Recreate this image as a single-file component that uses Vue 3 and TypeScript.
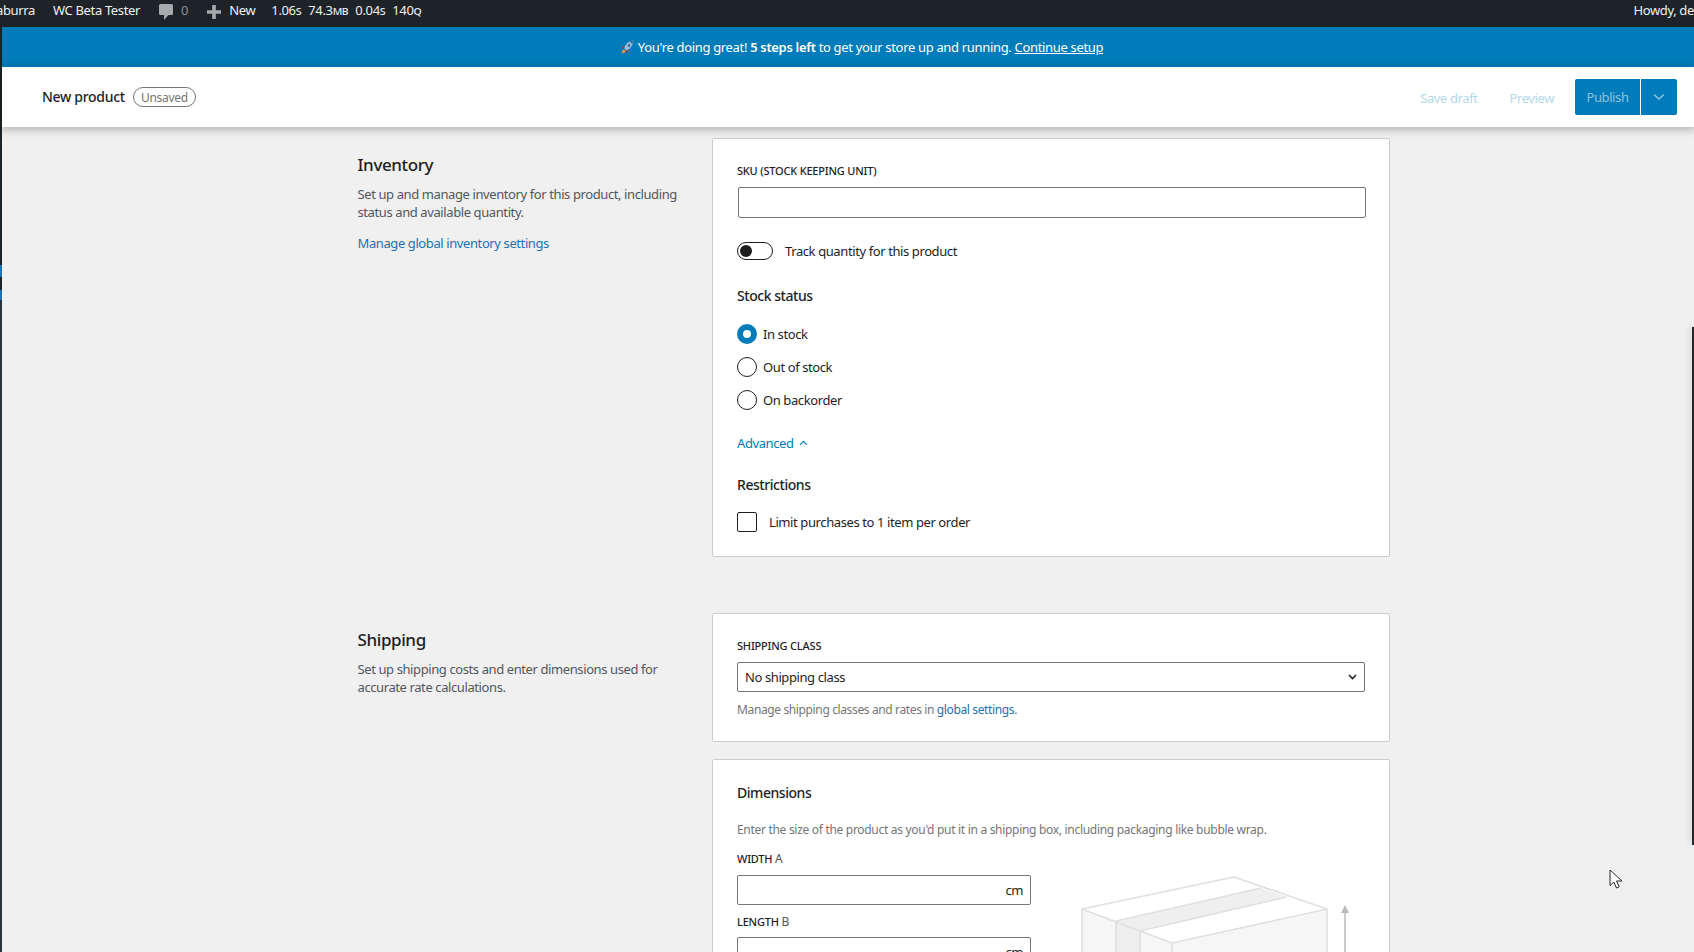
<script setup lang="ts">
const stats = ['1.06s', '74.3mb', '0.04s', '140q']
const stock = [
  { label: 'In stock', on: true },
  { label: 'Out of stock', on: false },
  { label: 'On backorder', on: false }
]
</script>

<template>
  <div class="app">
    <header class="adminbar">
      <span class="ab-site">aburra</span>
      <span class="ab-beta">WC Beta Tester</span>
      <svg class="ab-comment" width="14" height="16" viewBox="0 0 14 16"><path d="M1.500 0h11A1.500 1.500 0 0 1 14 1.500v8a1.500 1.500 0 0 1-1.500 1.500H9.500L5 16v-5H1.500A1.500 1.500 0 0 1 0 9.500v-8A1.500 1.500 0 0 1 1.500 0z" fill="#a7aaad"/></svg>
      <span class="ab-count">0</span>
      <svg class="ab-plus" width="14" height="14" viewBox="0 0 14 14"><path d="M5.200 0h3.600v5.200H14v3.600H8.800V14H5.200V8.800H0V5.200h5.200z" fill="#a7aaad"/></svg>
      <span class="ab-new">New</span>
      <span class="ab-stats"><span v-for="s in stats" :key="s" class="ab-stat">{{ s }}</span></span>
      <span class="ab-howdy">Howdy, de</span>
    </header>

    <div class="below">
      <aside class="strip">
        <span class="strip-a"></span>
        <span class="strip-b"></span>
        <span class="strip-c"></span>
        <span class="strip-d"></span>
        <span class="strip-e"></span>
      </aside>

      <main class="main">
        <div class="banner">
          <svg class="rocket" width="13" height="14" viewBox="0 0 13 14">
            <path d="M12.500.5C9 .8 6 2.500 4 6l-1 2 2.500 2.500 2-1c3-2 4.800-5.500 5-9z" fill="#9dbcd8"/>
            <path d="M12.500.5c-1.500.1-2.700.5-3.800 1.100l2.500 2.700c.7-1.100 1.200-2.400 1.300-3.800z" fill="#3f6fa8"/>
            <circle cx="8" cy="5.500" r="1.300" fill="#2f5f95"/>
            <path d="M4 6 1.500 6.500 .8 9 3 8zM5.500 10.500 5 13l2.500-1 .2-2.500z" fill="#b5373b"/>
            <path d="M3 9.500c-1.200.2-2 1.300-2.300 3.800 2.300-.3 3.500-1.200 3.700-2.400z" fill="#eea12c"/>
          </svg>
          <span>You're doing great! <b>5 steps left</b> to get your store up and running. <a class="banner-link">Continue setup</a></span>
        </div>

        <div class="head">
          <span class="head-title">New product</span>
          <span class="badge">Unsaved</span>
          <span class="head-fill"></span>
          <span class="ghost ghost-save">Save draft</span>
          <span class="ghost ghost-preview">Preview</span>
          <span class="publish">Publish</span>
          <span class="publish-more">
            <svg width="12" height="8" viewBox="0 0 12 8"><path d="M1 1.500l5 4.500 5-4.500" fill="none" stroke="#8cc4e0" stroke-width="1.500"/></svg>
          </span>
        </div>

        <div class="content">
          <section class="sec">
            <div class="side">
              <h2 class="side-title">Inventory</h2>
              <p class="side-text">Set up and manage inventory for this product, including status and available quantity.</p>
              <a class="side-link">Manage global inventory settings</a>
            </div>
            <div class="cards">
              <div class="card">
                <label class="label">SKU (STOCK KEEPING UNIT)</label>
                <div class="input input-sku"></div>
                <div class="toggle-row">
                  <span class="toggle"><span class="knob"></span></span>
                  <span class="body-text">Track quantity for this product</span>
                </div>
                <h3 class="subhead subhead-stock">Stock status</h3>
                <div class="radios">
                  <div v-for="r in stock" :key="r.label" class="radio-row">
                    <span class="radio" :class="{ on: r.on }"></span>
                    <span class="body-text">{{ r.label }}</span>
                  </div>
                </div>
                <div class="advanced">
                  <span>Advanced</span>
                  <svg width="9" height="6" viewBox="0 0 9 6"><path d="M1 4.800l3.500-3.500 3.500 3.500" fill="none" stroke="#007cba" stroke-width="1.200"/></svg>
                </div>
                <h3 class="subhead subhead-restrict">Restrictions</h3>
                <div class="check-row">
                  <span class="check"></span>
                  <span class="body-text">Limit purchases to 1 item per order</span>
                </div>
              </div>
            </div>
          </section>

          <section class="sec sec-ship">
            <div class="side">
              <h2 class="side-title">Shipping</h2>
              <p class="side-text">Set up shipping costs and enter dimensions used for accurate rate calculations.</p>
            </div>
            <div class="cards">
              <div class="card card-ship">
                <label class="label">SHIPPING CLASS</label>
                <div class="input select">
                  <span>No shipping class</span>
                  <svg width="9" height="6" viewBox="0 0 9 6"><path d="M1 1l3.500 3.500L8 1" fill="none" stroke="#1e1e1e" stroke-width="1.600"/></svg>
                </div>
                <p class="help help-ship">Manage shipping classes and rates in <a class="help-link">global settings</a>.</p>
              </div>
              <div class="card card-dim">
                <h3 class="subhead">Dimensions</h3>
                <p class="help help-dim">Enter the size of the product as you'd put it in a shipping box, including packaging like bubble wrap.</p>
                <div class="dim-row">
                  <div class="dim-fields">
                    <label class="label label-width">WIDTH <span class="dim-letter">A</span></label>
                    <div class="input unit"><span>cm</span></div>
                    <label class="label label-length">LENGTH <span class="dim-letter">B</span></label>
                    <div class="input unit unit-second"><span>cm</span></div>
                  </div>
                  <svg class="box" width="285" height="110" viewBox="1075 870 285 110">
                    <path d="M1082 909l90 34v40h-90z" fill="#f6f6f6"/>
                    <path d="M1172 943l155-34v74h-155z" fill="#f6f6f6"/>
                    <path d="M1116 921l24 10v52h-24z" fill="#efefef"/>
                    <path d="M1261 888l26 9-147 34-24-10z" fill="#efefef"/>
                    <g fill="none" stroke="#e0e0e0" stroke-width="1.700" stroke-linejoin="round">
                      <path d="M1082 983v-74l152-32 93 32v74"/>
                      <path d="M1082 909l90 34 155-34"/>
                      <path d="M1172 943v40M1116 921v62M1140 931v52"/>
                      <path d="M1116 921l145-33M1140 931l147-34"/>
                    </g>
                    <path d="M1345 913v70" stroke="#bbb" stroke-width="1.500" fill="none"/>
                    <path d="M1345 905l4 8h-8z" fill="#bbb"/>
                  </svg>
                </div>
              </div>
            </div>
          </section>
        </div>
      </main>
    </div>

    <span class="scrollthumb"></span>
    <svg class="cursor" width="14" height="20" viewBox="0 0 14 20">
      <path d="M1 1v15.500l3.800-3.500 2.700 6 2.700-1.200-2.700-5.800H13z" fill="#fff" stroke="#23282d" stroke-width="1"/>
    </svg>
  </div>
</template>

<style>
html, body { margin: 0; height: 100%; overflow: hidden; background: #f0f0f0; }
</style>

<style scoped>
.app {
  position: relative;
  width: 1694px;
  height: 952px;
  overflow: hidden;
  display: flex;
  flex-direction: column;
  font-family: "Noto Sans", "Open Sans", sans-serif;
  font-size: 13px;
  line-height: 18px;
  color: #1e1e1e;
  letter-spacing: -0.4px;
  background: #f0f0f0;
}
.adminbar {
  flex: 0 0 27px;
  box-sizing: border-box;
  height: 27px;
  padding-bottom: 6px;
  background: #1d2327;
  color: #f0f0f1;
  display: flex;
  align-items: center;
  line-height: 21px;
  letter-spacing: -0.35px;
  white-space: nowrap;
  overflow: hidden;
}
.ab-site { margin-left: -4px; }
.ab-beta { margin-left: 18px; }
.ab-comment { margin: 3px 0 0 19px; }
.ab-count { margin-left: 8px; color: #8c8f94; }
.ab-plus { margin: 3px 0 0 19px; }
.ab-new { margin-left: 8px; }
.ab-stats { margin-left: 16px; display: flex; gap: 7px; font-variant: small-caps; }
.ab-howdy { margin-left: auto; }

.below { flex: 1; display: flex; min-height: 0; }
.strip { flex: 0 0 2px; display: flex; flex-direction: column; background: #2c3338; }
.strip-a { height: 238px; background: #1d2327; }
.strip-b { height: 12px; background: #2271b1; }
.strip-c { height: 13px; background: #1d2327; }
.strip-d { height: 10px; background: #2271b1; }
.strip-e { flex: 1; background: #2c3338; }

.main { flex: 1; min-width: 0; display: flex; flex-direction: column; }
.banner {
  flex: 0 0 40px;
  background: #007cba;
  color: #fff;
  display: flex;
  align-items: center;
  justify-content: center;
  gap: 4px;
  padding-left: 28px;
  letter-spacing: -0.33px;
}
.banner b { font-weight: 600; }
.banner-link { text-decoration: underline; }

.head {
  position: relative;
  z-index: 2;
  flex: 0 0 60px;
  box-sizing: border-box;
  background: #fff;
  display: flex;
  align-items: center;
  padding: 0 17px 0 40px;
  box-shadow: 0 2px 8px 1px rgba(0, 0, 0, 0.25);
}
.head-title { font-size: 14px; font-weight: 500; letter-spacing: -0.3px; }
.badge {
  margin-left: 8px;
  box-sizing: border-box;
  height: 20px;
  width: 63px;
  border: 1px solid #757575;
  border-radius: 10px;
  font-size: 12px;
  line-height: 19px;
  color: #757575;
  text-align: center;
  letter-spacing: -0.3px;
}
.head-fill { flex: 1; }
.ghost { color: #b3d8ea; padding-top: 1px; letter-spacing: -0.4px; }
.ghost-preview { margin-left: 32px; }
.publish {
  margin-left: 21px;
  width: 65px;
  height: 36px;
  background: #007cba;
  border-radius: 2px 0 0 2px;
  color: #8cc4e0;
  text-align: center;
  line-height: 37px;
}
.publish-more {
  margin-left: 1px;
  width: 36px;
  height: 36px;
  background: #007cba;
  border-radius: 0 2px 2px 0;
  display: flex;
  align-items: center;
  justify-content: center;
}

.content { flex: 1; min-height: 0; padding: 11px 0 0 355.5px; }
.sec { display: flex; }
.sec-ship { margin-top: 56px; }
.side { flex: 0 0 354.5px; width: 354.5px; }
.side-title { margin: 15px 0 0; font-size: 17px; line-height: 24px; font-weight: 500; letter-spacing: -0.4px; }
.side-text { margin: 8px 0 0; width: 326px; color: #50575e; }
.side-link { display: block; margin-top: 13px; color: #2271b1; }
.cards { width: 678px; display: flex; flex-direction: column; gap: 17px; }
.card {
  background: #fff;
  border: 1px solid #ccc;
  border-radius: 2px;
  padding: 24px 23px 24px 24px;
  box-sizing: border-box;
}
.card-ship { padding-bottom: 23px; }
.card-dim { padding-top: 23px; }
.label { display: block; font-size: 11px; line-height: 16px; font-weight: 500; letter-spacing: -0.2px; }
.input {
  box-sizing: border-box;
  height: 30px;
  margin-top: 8px;
  background: #fff;
  border: 1px solid #757575;
  border-radius: 2px;
}
.input-sku { margin-left: 1px; width: 628px; height: 31px; }
.toggle-row { display: flex; align-items: center; margin-top: 24px; }
.toggle {
  box-sizing: border-box;
  width: 36px;
  height: 18px;
  border: 1.5px solid #1e1e1e;
  border-radius: 9px;
  display: flex;
  align-items: center;
  padding-left: 2px;
}
.knob { width: 12px; height: 12px; border-radius: 50%; background: #1e1e1e; }
.toggle-row .body-text { margin-left: 12px; }
.body-text { color: #1e1e1e; }
.subhead { margin: 0; font-size: 14px; line-height: 20px; font-weight: 500; letter-spacing: -0.45px; }
.subhead-stock { margin-top: 26px; }
.radios { margin-top: 18px; display: flex; flex-direction: column; gap: 13px; }
.radio-row { display: flex; align-items: center; gap: 6px; height: 20px; }
.radio {
  box-sizing: border-box;
  width: 20px;
  height: 20px;
  border: 1px solid #1e1e1e;
  border-radius: 50%;
  background: #fff;
}
.radio.on { border: 6.5px solid #007cba; }
.advanced { margin-top: 24px; display: flex; align-items: center; gap: 5px; color: #007cba; }
.subhead-restrict { margin-top: 23px; }
.check-row { margin-top: 17px; display: flex; align-items: center; gap: 12px; }
.check {
  box-sizing: border-box;
  width: 20px;
  height: 20px;
  border: 1px solid #1e1e1e;
  border-radius: 2px;
}
.select {
  width: 628px;
  display: flex;
  align-items: center;
  justify-content: space-between;
  padding: 0 7px 0 7px;
  margin-top: 8px;
}
.help { margin: 9px 0 0; font-size: 12px; line-height: 16px; color: #757575; letter-spacing: -0.33px; }
.help-ship { margin-top: 10px; letter-spacing: -0.37px; }
.help-link { color: #2271b1; }
.help-dim { margin-top: 19px; letter-spacing: -0.3px; }
.dim-row { display: flex; align-items: flex-start; }
.dim-fields { flex: 0 0 294px; width: 294px; }
.label-width { margin-top: 13px; }
.label-length { margin-top: 9px; }
.dim-letter { font-weight: 400; color: #50575e; font-size: 12px; }
.unit {
  display: flex;
  align-items: center;
  justify-content: flex-end;
  padding-right: 7px;
}
.unit-second { margin-top: 7px; }
.box { display: block; margin: 32px 0 0 44px; flex: none; }

.scrollthumb {
  position: absolute;
  right: 0;
  top: 327px;
  height: 518px;
  width: 2px;
  background: #23282d;
  box-shadow: -2px 0 6px rgba(0, 0, 0, 0.2);
}
.cursor { position: absolute; left: 1609px; top: 869px; }
</style>
